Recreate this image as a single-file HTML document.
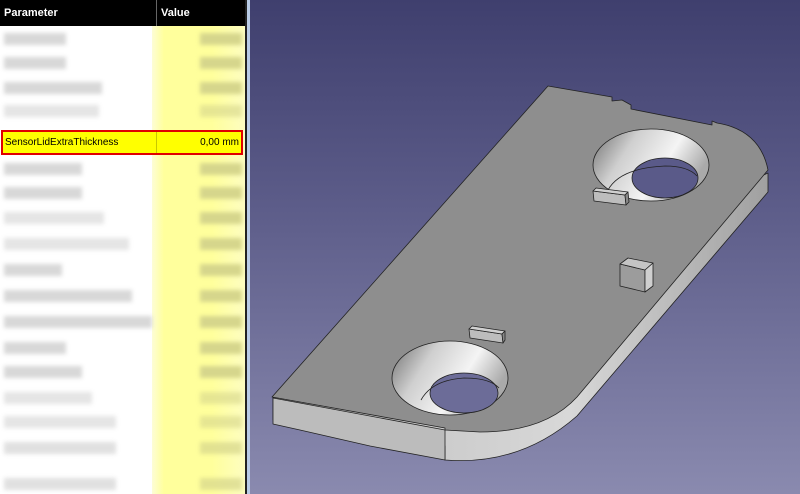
<!DOCTYPE html>
<html><head><meta charset="utf-8"><style>
html,body{margin:0;padding:0;width:800px;height:494px;overflow:hidden;font-family:"Liberation Sans",sans-serif}
#panel{position:absolute;left:0;top:0;width:245px;height:494px;background:#fff}
#hdr{position:absolute;left:0;top:0;width:245px;height:26px;background:#000;color:#fff;font-size:11px;font-weight:bold}
#hdr span{position:absolute;top:7px}
#ycol{position:absolute;left:152px;top:26px;width:93px;height:468px;background:linear-gradient(90deg,#fdfdd6 0,#ffff9c 12px,#ffff9c 60px,#fdfdc0 93px)}
.b{position:absolute;height:12px;background:#d4d4d4;filter:blur(2px);opacity:.9}
.v{position:absolute;left:200px;width:42px;height:12px;background:#d6d68c;filter:blur(2px)}
#sel{position:absolute;left:1px;top:130px;width:238px;height:21px;background:#ffff00;border:2px solid #e00000;font-size:10px}
#div{position:absolute;left:245px;top:0;width:2px;height:494px;background:#222}
#div2{position:absolute;left:247px;top:0;width:3px;height:494px;background:#b9cbe6}
#view{position:absolute;left:250px;top:0;width:550px;height:494px;background:linear-gradient(180deg,#3f3f6e 0%,#5b5b88 40%,#8a8aaf 100%)}
</style></head><body>
<div id="panel">
<div id="ycol"></div>
<div class="b" style="left:4px;top:33px;width:62px"></div><div class="v" style="top:33px"></div>
<div class="b" style="left:4px;top:57px;width:62px"></div><div class="v" style="top:57px"></div>
<div class="b" style="left:4px;top:82px;width:98px"></div><div class="v" style="top:82px"></div>
<div class="b" style="left:4px;top:105px;width:95px;opacity:.6"></div><div class="v" style="top:105px;opacity:.6"></div>
<div class="b" style="left:4px;top:163px;width:78px"></div><div class="v" style="top:163px"></div>
<div class="b" style="left:4px;top:187px;width:78px"></div><div class="v" style="top:187px"></div>
<div class="b" style="left:4px;top:212px;width:100px;opacity:.6"></div><div class="v" style="top:212px"></div>
<div class="b" style="left:4px;top:238px;width:125px;opacity:.6"></div><div class="v" style="top:238px"></div>
<div class="b" style="left:4px;top:264px;width:58px"></div><div class="v" style="top:264px"></div>
<div class="b" style="left:4px;top:290px;width:128px"></div><div class="v" style="top:290px"></div>
<div class="b" style="left:4px;top:316px;width:148px"></div><div class="v" style="top:316px"></div>
<div class="b" style="left:4px;top:342px;width:62px"></div><div class="v" style="top:342px"></div>
<div class="b" style="left:4px;top:366px;width:78px"></div><div class="v" style="top:366px"></div>
<div class="b" style="left:4px;top:392px;width:88px;opacity:.6"></div><div class="v" style="top:392px;opacity:.6"></div>
<div class="b" style="left:4px;top:416px;width:112px;opacity:.6"></div><div class="v" style="top:416px;opacity:.6"></div>
<div class="b" style="left:4px;top:442px;width:112px;opacity:.7"></div><div class="v" style="top:442px;opacity:.7"></div>
<div class="b" style="left:4px;top:478px;width:112px;opacity:.7"></div><div class="v" style="top:478px;opacity:.7"></div>
<div id="sel"><span style="position:absolute;left:2px;top:5px">SensorLidExtraThickness</span><span style="position:absolute;left:153px;top:0;width:1px;height:21px;background:#c8c800"></span><span style="position:absolute;right:2px;top:5px">0,00 mm</span></div>
<div id="hdr"><span style="left:4px">Parameter</span><span style="left:156px;top:0;width:1px;height:26px;background:#666"></span><span style="left:161px">Value</span></div>
</div>
<div id="div"></div><div id="div2"></div>
<div id="view">
<svg width="550" height="494" viewBox="250 0 550 494" style="position:absolute;left:0;top:0">
<defs>
<linearGradient id="side" x1="0" y1="0" x2="1" y2="0"><stop offset="0" stop-color="#bdbdbd"/><stop offset="0.6" stop-color="#d8d8d8"/><stop offset="1" stop-color="#a0a0a0"/></linearGradient>
<linearGradient id="cone" x1="0" y1="0" x2="1" y2="0.4"><stop offset="0" stop-color="#6e6e6e"/><stop offset="0.35" stop-color="#cfcfcf"/><stop offset="0.7" stop-color="#f4f4f4"/><stop offset="1" stop-color="#aaa"/></linearGradient>
</defs>
<g stroke="#222" stroke-width="0.8" stroke-linejoin="round">
<path d="M273,398 L273,420 L291,422 L291,416 L350,423 L350,426 L370,428 L370,432 L445,446 L445,460 Q520,466 577,416 L768,192 L768,173 Z" fill="url(#side)"/>
<path d="M273,398 L445,430 L445,460 L370,446 L300,430 L273,424 Z" fill="#bcbcbc"/>
<path d="M548,86 L612,97 L612,101 L622,100 L631,105 L631,109 L712,125 L712,121 L717,123 Q760,130 768,170 L577,397 Q545,432 480,432 L445,430 L445,428 L272,397 Z" fill="#8e8e8e"/>
<ellipse cx="651" cy="165" rx="58" ry="36" fill="url(#cone)"/>
<ellipse cx="665" cy="178" rx="33" ry="20" fill="#5a5a89"/>
<path d="M608,190 Q620,168 665,166 Q688,166 697,176" fill="none"/>
<ellipse cx="450" cy="378" rx="58" ry="37" fill="url(#cone)"/>
<ellipse cx="464" cy="393" rx="34" ry="20" fill="#6c6c98"/>
<path d="M421,400 Q432,380 464,378 Q490,378 499,388" fill="none"/>
<path d="M593,191 L625,195 L626,205 L594,201 Z" fill="#bdbdbd"/><path d="M593,191 L596,188 L628,192 L625,195 Z" fill="#d0d0d0"/><path d="M625,195 L628,192 L629,202 L626,205 Z" fill="#888"/>
<path d="M469,329 L502,334 L503,343 L470,338 Z" fill="#bdbdbd"/><path d="M469,329 L472,326 L505,331 L502,334 Z" fill="#d0d0d0"/><path d="M502,334 L505,331 L505,340 L503,343 Z" fill="#888"/>
<path d="M620,264 L645,270 L645,292 L620,286 Z" fill="#9c9c9c"/><path d="M620,264 L628,258 L653,263 L645,270 Z" fill="#c4c4c4"/><path d="M645,270 L653,263 L653,286 L645,292 Z" fill="#cfcfcf"/>
</g>
</svg>
</div>
</body></html>
